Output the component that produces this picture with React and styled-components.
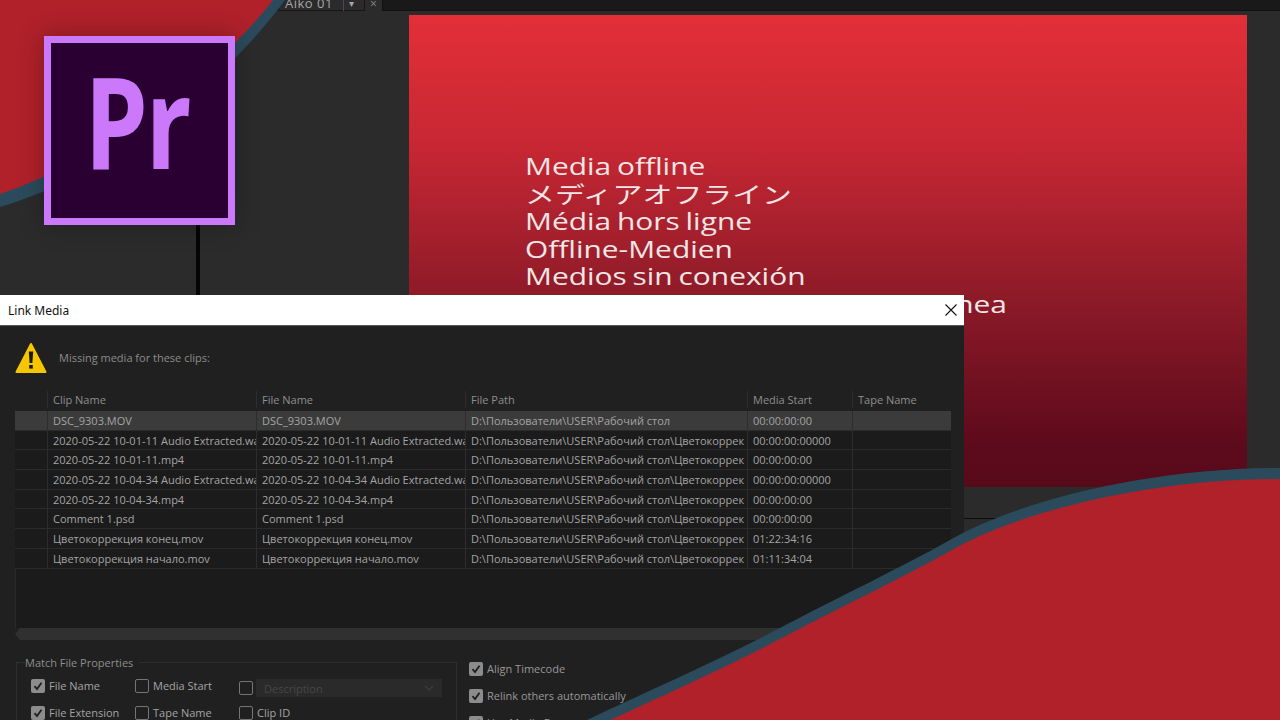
import React from "react"
import styled, { createGlobalStyle } from "styled-components"

const GlobalStyle = createGlobalStyle`
  html, body {
    margin: 0;
    padding: 0;
    background: #2b2b2b;
  }
`

const columns = "32px 209px 209px 282px 105px 99px"
const basePath = "D:\\Пользователи\\USER\\Рабочий стол"
const fullPath = basePath + "\\Цветокоррек"

const clips = [
  { name: "DSC_9303.MOV", path: basePath, start: "00:00:00:00", selected: true },
  { name: "2020-05-22 10-01-11 Audio Extracted.wav", path: fullPath, start: "00:00:00:00000" },
  { name: "2020-05-22 10-01-11.mp4", path: fullPath, start: "00:00:00:00" },
  { name: "2020-05-22 10-04-34 Audio Extracted.wav", path: fullPath, start: "00:00:00:00000" },
  { name: "2020-05-22 10-04-34.mp4", path: fullPath, start: "00:00:00:00" },
  { name: "Comment 1.psd", path: fullPath, start: "00:00:00:00" },
  { name: "Цветокоррекция конец.mov", path: fullPath, start: "01:22:34:16" },
  { name: "Цветокоррекция начало.mov", path: fullPath, start: "01:11:34:04" },
]

const offlineLines = [
  "Media offline",
  "メディアオフライン",
  "Média hors ligne",
  "Offline-Medien",
  "Medios sin conexión",
  "Contenuti multimediali non in linea",
]

const CheckBox = ({ checked }) => (
  <Box checked={checked}>
    {checked && (
      <svg width="10" height="10" viewBox="0 0 10 10">
        <path d="M1.5 5.2 L4 8 L8.5 1.8" fill="none" stroke="#1e1e1e" strokeWidth="1.8" />
      </svg>
    )}
  </Box>
)

const Option = ({ checked, children }) => (
  <OptionRow>
    <CheckBox checked={checked} />
    <span>{children}</span>
  </OptionRow>
)

export default function App() {
  return (
    <Stage>
      <GlobalStyle />

      <TopBar>
        <SequenceTab>
          <TabName>Aiko 01</TabName>
          <TabMenu>▾</TabMenu>
        </SequenceTab>
        <TabClose>×</TabClose>
        <TopStrip />
      </TopBar>

      <Workspace>
        <SourcePane />
        <PaneDivider />
        <MonitorPane>
          <OfflinePreview>
            <OfflineText>
              {offlineLines.map((line) => (
                <div key={line}>{line}</div>
              ))}
            </OfflineText>
          </OfflinePreview>
        </MonitorPane>
      </Workspace>

      <Dialog>
        <TitleBar>
          <span>Link Media</span>
          <svg width="12" height="12" viewBox="0 0 12 12">
            <path d="M0.5 0.5 L11.5 11.5 M11.5 0.5 L0.5 11.5" stroke="#111" strokeWidth="1.1" />
          </svg>
        </TitleBar>

        <DialogBody>
          <WarningRow>
            <svg width="32" height="32" viewBox="0 0 32 32">
              <path d="M16 2 L30.5 30 L1.5 30 Z" fill="#f6c600" stroke="#f6c600" strokeWidth="2" strokeLinejoin="round" />
              <path d="M13.8 9.5 H18.2 L17.4 21 H14.6 Z" fill="#1a1a1a" />
              <rect x="14.2" y="23" width="3.6" height="3.6" fill="#1a1a1a" />
            </svg>
            <WarningText>Missing media for these clips:</WarningText>
          </WarningRow>

          <ClipTable>
            <HeaderRow>
              <Cell />
              <Cell>Clip Name</Cell>
              <Cell>File Name</Cell>
              <Cell>File Path</Cell>
              <Cell>Media Start</Cell>
              <Cell>Tape Name</Cell>
            </HeaderRow>
            {clips.map((clip) => (
              <ClipRow key={clip.name} selected={clip.selected}>
                <Cell />
                <Cell>{clip.name}</Cell>
                <Cell>{clip.name}</Cell>
                <Cell>{clip.path}</Cell>
                <Cell>{clip.start}</Cell>
                <Cell />
              </ClipRow>
            ))}
          </ClipTable>
          <ScrollBar />

          <OptionsArea>
            <MatchGroup>
              <GroupLabel>Match File Properties</GroupLabel>
              <OptionColumn>
                <Option checked>File Name</Option>
                <Option checked>File Extension</Option>
              </OptionColumn>
              <OptionColumn>
                <Option>Media Start</Option>
                <Option>Tape Name</Option>
              </OptionColumn>
              <DescriptionColumn>
                <DescriptionRow>
                  <CheckBox />
                  <DescriptionSelect>
                    <span>Description</span>
                    <svg width="10" height="6" viewBox="0 0 10 6">
                      <path d="M1 1 L5 5 L9 1" fill="none" stroke="#3f3f3f" strokeWidth="1.2" />
                    </svg>
                  </DescriptionSelect>
                </DescriptionRow>
                <Option>Clip ID</Option>
              </DescriptionColumn>
            </MatchGroup>
            <RelinkColumn>
              <Option checked>Align Timecode</Option>
              <Option checked>Relink others automatically</Option>
              <Option checked>Use Media Browser to locate files</Option>
            </RelinkColumn>
          </OptionsArea>
        </DialogBody>
      </Dialog>

      <Waves viewBox="0 0 1280 720">
        <path d="M0 0 L285 0 C245 55 140 165 0 207 Z" fill="#2b4b5c" />
        <path d="M0 0 L273 0 C235 50 130 150 0 194 Z" fill="#b0212a" />
        <path d="M587 720 C650 690 717 661 776 630 C835 599 900 568 950 540 C1020 500 1150 468 1280 468 L1280 720 Z" fill="#2b4b5c" />
        <path d="M587 731 C650 701 717 672 776 641 C835 610 900 579 950 551 C1020 511 1150 479 1280 479 L1280 731 Z" fill="#b0212a" />
      </Waves>

      <Logo>
        <LogoText>Pr</LogoText>
      </Logo>
    </Stage>
  )
}

const Stage = styled.div`
  position: relative;
  width: 1280px;
  height: 720px;
  overflow: hidden;
  background: #2b2b2b;
  font-family: "Open Sans", "Noto Sans", sans-serif;
`

const TopBar = styled.div`
  display: flex;
  align-items: flex-end;
  height: 11px;
  padding-left: 278px;
  overflow: hidden;
`

const SequenceTab = styled.div`
  display: flex;
  align-items: center;
  width: 87px;
  height: 16px;
  box-sizing: border-box;
  padding-left: 6px;
  background: #2b2b2b;
  border: 1px solid #161616;
  color: #a6a6a6;
  font-size: 13px;
`

const TabName = styled.span`
  width: 58px;
  border-right: 1px solid #4a4a4a;
  letter-spacing: 0.5px;
`

const TabMenu = styled.span`
  margin-left: 5px;
  font-size: 10px;
`

const TabClose = styled.span`
  width: 17px;
  height: 14px;
  color: #8a8a8a;
  font-size: 12px;
  line-height: 14px;
  text-align: center;
`

const TopStrip = styled.div`
  flex: 1;
  height: 11px;
  background: #191919;
  border-left: 1px solid #111;
  border-bottom: 1px solid #111;
  box-sizing: border-box;
`

const Workspace = styled.div`
  display: flex;
  height: 507px;
  border-bottom: 1px solid #0c0c0c;
`

const SourcePane = styled.div`
  width: 196px;
  background: #2b2b2b;
`

const PaneDivider = styled.div`
  width: 4px;
  background: #050505;
`

const MonitorPane = styled.div`
  flex: 1;
  padding: 4px 33px 0 209px;
`

const OfflinePreview = styled.div`
  height: 472px;
  box-sizing: border-box;
  padding: 138px 0 0 116px;
  overflow: hidden;
  background: linear-gradient(180deg, #e32f38 0%, #c62733 28%, #8d1a28 60%, #5e0b1c 90%, #570a1a 100%);
`

const OfflineText = styled.div`
  color: #f0e6e6;
  font-family: "Open Sans", "Noto Sans CJK JP", sans-serif;
  font-size: 23px;
  line-height: 27.5px;
  white-space: nowrap;
  word-spacing: -1.5px;
  transform: scaleX(1.3);
  transform-origin: left top;
`

const Dialog = styled.div`
  position: absolute;
  left: 0;
  top: 295px;
  z-index: 1;
  display: flex;
  flex-direction: column;
  width: 964px;
  height: 425px;
  overflow: hidden;
`

const TitleBar = styled.div`
  display: flex;
  align-items: center;
  justify-content: space-between;
  height: 30px;
  flex: none;
  padding: 0 7px 0 8px;
  background: #fff;
  border-bottom: 1px solid #555;
  color: #111;
  font-family: "Noto Sans", sans-serif;
  font-size: 12px;
`

const DialogBody = styled.div`
  flex: 1;
  padding: 16px 13px 0 15px;
  background: #202020;
  color: #a4a4a4;
  font-size: 11px;
`

const WarningRow = styled.div`
  display: flex;
  align-items: center;
  gap: 12px;
  height: 32px;
  color: #8c8c8c;
  margin-bottom: 17px;
`

const WarningText = styled.span`
  padding-bottom: 2px;
`

const ClipTable = styled.div`
  height: 237px;
  background: #1b1b1b;
  border-left: 1px solid #2a2a2a;
`

const HeaderRow = styled.div`
  display: grid;
  grid-template-columns: ${columns};
  height: 20px;
  box-sizing: border-box;
  padding-bottom: 3px;
  margin-left: -1px;
  background: #202020;
  color: #8e8e8e;
`

const ClipRow = styled.div`
  display: grid;
  grid-template-columns: ${columns};
  height: 19.7px;
  box-sizing: border-box;
  margin-left: -1px;
  background: ${({ selected }) => (selected ? "#3b3b3b" : "#1b1b1b")};
  border-bottom: 1px solid #2b2b2b;
`

const Cell = styled.div`
  display: flex;
  align-items: center;
  padding-left: 5px;
  overflow: hidden;
  white-space: nowrap;
  border-left: 1px solid #2d2d2d;
  &:first-child {
    border-left: none;
  }
`

const ScrollBar = styled.div`
  height: 12px;
  background: #303030;
  clip-path: polygon(5px 0, 100% 0, 100% 100%, 5px 100%, 0 50%);
`

const OptionsArea = styled.div`
  display: flex;
  gap: 12px;
  margin-top: 15px;
`

const MatchGroup = styled.fieldset`
  display: flex;
  width: 441px;
  height: 90px;
  box-sizing: border-box;
  margin: 0 0 0 1px;
  padding: 8px 0 0 14px;
  border: 1px solid #2e2e2e;
  border-bottom: none;
`

const GroupLabel = styled.legend`
  margin-left: -6px;
  padding: 0 6px 0 0;
  color: #8e8e8e;
`

const OptionColumn = styled.div`
  display: flex;
  flex-direction: column;
  gap: 12px;
  width: 104px;
`

const DescriptionColumn = styled.div`
  display: flex;
  flex-direction: column;
  gap: 8px;
  flex: 1;
`

const DescriptionRow = styled.div`
  display: flex;
  align-items: center;
  gap: 3px;
  margin-top: 1px;
`

const DescriptionSelect = styled.div`
  display: flex;
  align-items: center;
  justify-content: space-between;
  width: 186px;
  height: 18px;
  box-sizing: border-box;
  padding: 0 8px;
  background: #2a2a2a;
  color: #474747;
`

const RelinkColumn = styled.div`
  display: flex;
  flex-direction: column;
  gap: 12px;
  margin-top: 6px;
  color: #989898;
`

const OptionRow = styled.label`
  display: flex;
  align-items: center;
  gap: 4px;
  height: 15px;
  white-space: nowrap;
`

const Box = styled.span`
  display: flex;
  align-items: center;
  justify-content: center;
  width: 14px;
  height: 14px;
  flex: none;
  box-sizing: border-box;
  border-radius: 2px;
  background: ${({ checked }) => (checked ? "#8c8c8c" : "transparent")};
  border: ${({ checked }) => (checked ? "none" : "1.5px solid #757575")};
`

const Waves = styled.svg`
  position: absolute;
  left: 0;
  top: 0;
  z-index: 2;
  width: 1280px;
  height: 720px;
  pointer-events: none;
`

const Logo = styled.div`
  position: absolute;
  left: 44px;
  top: 36px;
  z-index: 3;
  display: flex;
  align-items: center;
  justify-content: center;
  width: 191px;
  height: 189px;
  box-sizing: border-box;
  padding: 0 6px 22px 0;
  background: #2a0033;
  border: 7px solid #cc78fb;
  box-shadow: 0 0 24px rgba(0, 0, 0, 0.28);
`

const LogoText = styled.span`
  color: #cc78fb;
  font-family: "Open Sans", sans-serif;
  font-size: 127px;
  font-weight: 700;
  letter-spacing: -3px;
  line-height: 1;
  transform: scaleX(0.8);
`
